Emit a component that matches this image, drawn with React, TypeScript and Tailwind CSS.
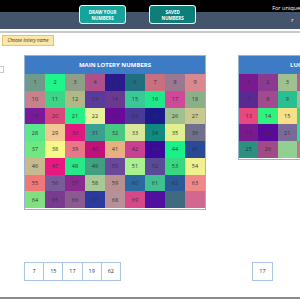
const mainColors = [
  "#6f9a8a", "#1ef58a", "#8f9e87", "#b0508a", "#2a1a8a", "#1e6f7f", "#c87080", "#9a7890", "#d98890",
  "#c8808a", "#3dd48a", "#b0b888", "#5a3a9a", "#6a3a90", "#3ac896", "#1ee888", "#d04898", "#8ab08a",
  "#7a1a9a", "#d8487a", "#28f088", "#e8f0a0", "#6a0a9a", "#4a3a98", "#1a1a8a", "#a0c090", "#c8c890",
  "#5ae88a", "#f0c890", "#e01880", "#3aa090", "#48c880", "#d8e898", "#108a80", "#e0f090", "#70708a",
  "#70e880", "#f8f888", "#e87888", "#c0107a", "#e8b080", "#c84090", "#3a0a9a", "#18f088", "#2a4a98",
  "#c8b890", "#e81880", "#28e888", "#40a080", "#6a489a", "#a8f090", "#5a4a98", "#38d880", "#f0f090",
  "#f07878", "#7a5a9a", "#882a90", "#a8c898", "#b89090", "#2a6aa0", "#40c090", "#2a5a98", "#f08888",
  "#80e080", "#7a3a90", "#8a5a90", "#2a3aa0", "#b89098", "#d84888", "#5010a0", "#406a80", "#d06890",
];

const luckyColors = [
  "#7a1a90", "#8a3a90", "#a0c090", "#b06090", "#48c890", "#6a3a90",
  "#5a2a90", "#a04a90", "#28c090", "#a0c090", "#d04898", "#3aa090",
  "#e84880", "#30f080", "#f8e088", "#38d880", "#7a5a9a", "#c8c890",
  "#7a1a90", "#5a0a9a", "#7a6a9a", "#20e888", "#e87888", "#2a4a98",
  "#2a9080", "#a04a88", "#90d090", "#c87090", "#5010a0", "#40a080",
];

const picked = [7, 15, 17, 19, 62];

function Panel({ title, colors, count, titleClass }: { title: string; colors: string[]; count: number; titleClass: string }) {
  return (
    <div className="shrink-0 border border-[#9bb3d1] bg-white pb-[1px]">
      <div className={`h-[18px] bg-[#3d7cc4] flex items-center text-white font-bold text-[6px] ${titleClass}`}>
        {title}
      </div>
      <div className="grid grid-cols-[repeat(9,20px)] auto-rows-[16.75px]">
        {colors.map((c, i) => (
          <div
            key={i}
            className="flex items-center justify-center text-[5.5px] text-[#333]"
            style={{ backgroundColor: c }}
          >
            {i < count ? i + 1 : ""}
          </div>
        ))}
      </div>
    </div>
  );
}

function LuckyPanel() {
  return (
    <div className="shrink-0 w-[160px] border border-[#9bb3d1] bg-white pb-[1px]">
      <div className="h-[18px] bg-[#3d7cc4] flex items-center pl-[51px] text-white font-bold text-[6px]">
        LUCKY NUMBERS
      </div>
      <div className="grid grid-cols-[repeat(6,19.3px)] auto-rows-[16.75px]">
        {luckyColors.map((c, i) => (
          <div
            key={i}
            className="flex items-center justify-center text-[5.5px] text-[#333]"
            style={{ backgroundColor: c }}
          >
            {i < 26 ? i + 1 : ""}
          </div>
        ))}
      </div>
    </div>
  );
}

export default function App() {
  return (
    <div className="w-[300px] h-[300px] overflow-hidden bg-white font-['Open_Sans',sans-serif]">
      {/* top bar */}
      <div className="h-[29px] bg-[linear-gradient(#000_0,#000_12px,#44546a_12px)] flex items-start relative">
        <div className="ml-[79px] mt-[5px] w-[50px] h-[19px] rounded-[3px] border border-white bg-[#17a39c] flex flex-col items-center justify-center text-white font-bold text-[4.5px] leading-[6px]">
          <span>DRAW YOUR</span>
          <span>NUMBERS</span>
        </div>
        <div className="ml-[23px] mt-[5px] w-[50px] h-[19px] rounded-[3px] border border-white bg-[#0e7f78] flex flex-col items-center justify-center text-white font-bold text-[4.5px] leading-[6px]">
          <span>SAVED</span>
          <span>NUMBERS</span>
        </div>
        <div className="ml-[76px] mt-[5px] text-white text-[5.5px] whitespace-nowrap leading-[7px]">
          <div>For unique</div>
          <div className="pl-[19px] mt-[5px]">r</div>
        </div>
      </div>
      <div className="mt-[2px] h-[2px] bg-[#c8c8c8]" />

      <div className="mt-[2px] ml-[2px] w-[52px] h-[11px] bg-[#fde7a6] border border-[#e3c56a] flex items-center justify-center text-[4.5px] italic text-[#333]">
        Choose lottery name
      </div>

      {/* panels */}
      <div className="mt-[9px] flex items-start">
        <div className="mt-[11px] w-[4px] h-[7px] shrink-0 border border-l-0 border-[#c9c9c9]" />
        <div className="ml-[20px]">
          <Panel title="MAIN LOTERY NUMBERS" colors={mainColors} count={69} titleClass="justify-center" />
        </div>
        <div className="ml-[32px]">
          <LuckyPanel />
        </div>
      </div>

      {/* drawn numbers */}
      <div className="mt-[52px] flex">
        <div className="ml-[24px] flex">
          {picked.map((n) => (
            <div
              key={n}
              className="w-[20.2px] h-[19px] -ml-[1px] first:ml-0 border border-[#a9c4e4] flex items-center justify-center text-[5.5px] text-[#333]"
            >
              {n}
            </div>
          ))}
        </div>
        <div className="ml-[131px] w-[21px] h-[19px] border border-[#a9c4e4] flex items-center justify-center text-[5.5px] text-[#333]">
          17
        </div>
      </div>

      <div className="mt-[16px] h-[2px] bg-[#8c8c8c]" />
    </div>
  );
}
